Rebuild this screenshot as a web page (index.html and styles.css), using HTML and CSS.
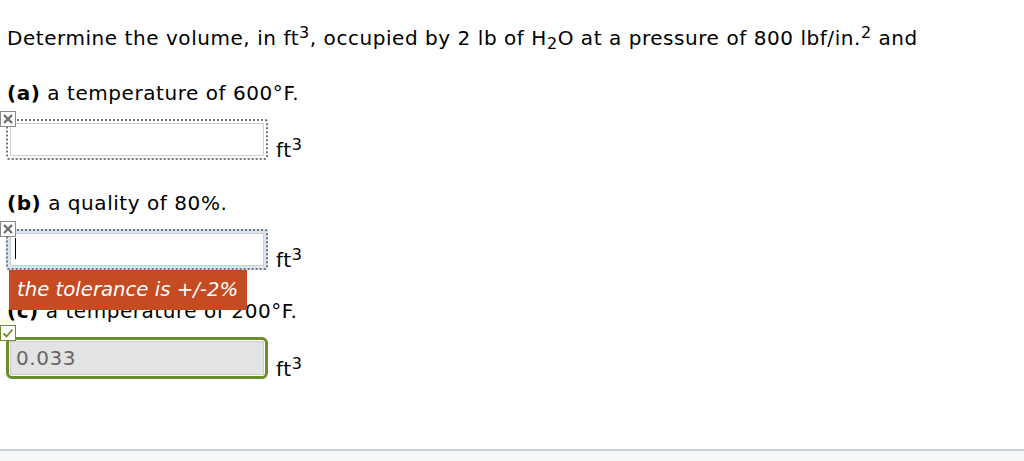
FILE: index.html
```html
<!DOCTYPE html>
<html>
<head>
<meta charset="utf-8">
<link rel="stylesheet" href="styles.css">
</head>
<body>
<main class="question">
  <p class="stem">Determine the volume, in ft<sup>3</sup>, occupied by 2 lb of H<sub>2</sub>O at a pressure of 800 lbf/in.<sup>2</sup> and</p>

  <section class="part part-a">
    <p class="label"><b>(a)</b> a temperature of 600°F.</p>
    <div class="answer">
      <span class="badge badge-wrong"><svg viewBox="0 0 14 14" width="14" height="14"><path d="M3 3 L11 11 M11 3 L3 11" stroke="#6f6f6f" stroke-width="2.4" fill="none"/></svg></span>
      <div class="field field-dotted"><div class="input"></div></div>
      <span class="unit">ft<sup>3</sup></span>
    </div>
  </section>

  <section class="part part-b">
    <p class="label"><b>(b)</b> a quality of 80%.</p>
    <div class="answer">
      <span class="badge badge-wrong"><svg viewBox="0 0 14 14" width="14" height="14"><path d="M3 3 L11 11 M11 3 L3 11" stroke="#6f6f6f" stroke-width="2.4" fill="none"/></svg></span>
      <div class="field field-dotted field-focus"><div class="input"><span class="caret"></span></div></div>
      <span class="unit">ft<sup>3</sup></span>
      <div class="tooltip">the tolerance is +/-2%</div>
    </div>
  </section>

  <section class="part part-c">
    <p class="label"><b>(c)</b> a temperature of 200°F.</p>
    <div class="answer">
      <span class="badge badge-right"><svg viewBox="0 0 14 14" width="14" height="14"><path d="M2.5 7.5 L5.5 10.5 L11.5 3.5" stroke="#6a8e2a" stroke-width="1.8" fill="none"/></svg></span>
      <div class="field field-correct"><div class="input input-filled">0.033</div></div>
      <span class="unit">ft<sup>3</sup></span>
    </div>
  </section>
</main>
<footer class="bottom-bar"></footer>
</body>
</html>
```

FILE: styles.css
```css
* { box-sizing: border-box; }

html, body {
  margin: 0;
  padding: 0;
  height: 100%;
}

body {
  display: flex;
  flex-direction: column;
  background: #ffffff;
  color: #000000;
  font-family: "DejaVu Sans", Verdana, sans-serif;
  font-size: 20px;
  letter-spacing: 0.55px;
  line-height: 22px;
}

.question {
  flex: 1;
  display: flex;
  flex-direction: column;
  padding-top: 27px;
}

.stem {
  margin: 0;
  padding-left: 7px;
  white-space: nowrap;
}

sup, sub {
  font-size: 16px;
  line-height: 0;
}
sup { vertical-align: 7px; }
sub { vertical-align: -4px; }

.part { display: flex; flex-direction: column; }

.label {
  margin: 0;
  padding-left: 7px;
  white-space: nowrap;
}

.part-a .label { margin-top: 33px; }
.part-b .label { margin-top: 32px; }
.part-c .label { margin-top: 30px; }

.answer {
  position: relative;
  display: flex;
  align-items: flex-end;
  gap: 8px;
  padding-left: 6px;
  margin-top: 15px;
}

.badge {
  position: absolute;
  left: 0;
  top: -8px;
  width: 16px;
  height: 16px;
  background: #ffffff;
  border: 1px solid #8a8a8a;
  display: flex;
  align-items: center;
  justify-content: center;
  z-index: 2;
}

.badge-right {
  border-color: #6a8e2a;
  top: -12px;
}

.field {
  width: 262px;
  height: 41px;
}

.field-dotted {
  border: 2px dotted #757575;
  border-radius: 3px;
  padding: 2px;
}

.field-focus {
  background: #d9e5f5;
}

.field-correct {
  border: 3px solid #6a8e2a;
  border-radius: 6px;
  padding: 1px;
  height: 42px;
}

.input {
  height: 100%;
  width: 100%;
  background: #ffffff;
  border: 1px solid #cfcfcf;
  position: relative;
}

.input-filled {
  background: #e3e3e3;
  border-color: #cdcdcd;
  color: #666666;
  padding-left: 5px;
  padding-top: 5px;
}

.caret {
  position: absolute;
  left: 4px;
  top: 4px;
  width: 1px;
  height: 21px;
  background: #000000;
}

.unit {
  line-height: 20px;
  margin-bottom: 0;
}

.tooltip {
  position: absolute;
  left: 9px;
  top: 41px;
  width: 238px;
  height: 40px;
  background: #c44b22;
  color: #ffffff;
  font-style: italic;
  font-size: 19.7px;
  letter-spacing: 0;
  padding-left: 8px;
  line-height: 40px;
  z-index: 3;
}

.bottom-bar {
  height: 12px;
  border-top: 2px solid #c9d1da;
  background: #f7f8fa;
}
```
